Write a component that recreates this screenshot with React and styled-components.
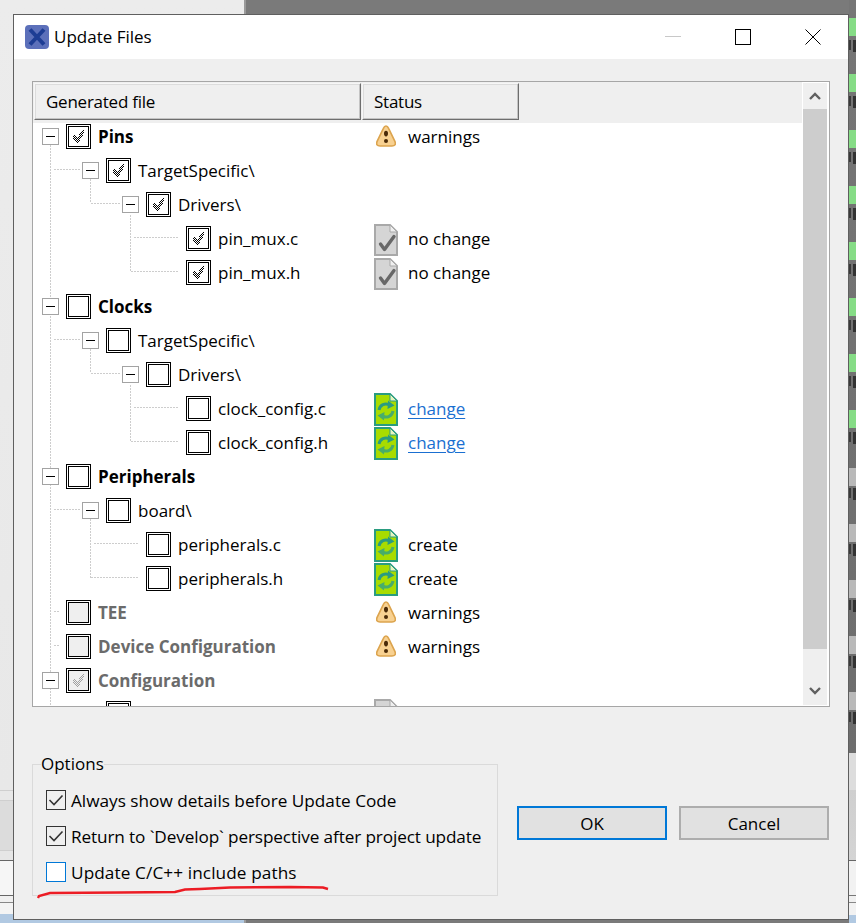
import React from 'react';
import styled, { createGlobalStyle } from 'styled-components';

const Global = createGlobalStyle`
  html, body { margin: 0; padding: 0; background: #e9e9e9; }
  body { font-family: "Open Sans", "Noto Sans", "Liberation Sans", sans-serif; }
`;

const Desktop = styled.div`
  position: relative;
  width: 856px;
  height: 923px;
  overflow: hidden;
  display: grid;
  grid-template-columns: 244px 605px 7px;
`;

const LeftPane = styled.div`
  background: linear-gradient(
    to bottom,
    #ececec 0, #e8e8e8 790px, #cfcfcf 790px, #cfcfcf 791px, #e8e8e8 791px, #e8e8e8 800px,
    #cfcfcf 800px, #cfcfcf 801px, #dcdcdc 801px, #dcdcdc 850px, #cfcfcf 850px, #cfcfcf 851px,
    #e6e6e6 851px, #e6e6e6 860px, #666 860px, #666 861px, #f6f6f6 861px, #f6f6f6 895px,
    #666 895px, #666 896px, #f0f0f0 896px, #f0f0f0 902px, #888 902px, #888 903px,
    #f4f4f4 903px, #f4f4f4 914px, #b1c9e2 914px
  );
`;

const MiddlePane = styled.div`
  background: #7a7a7a;
  border-left: 2px solid #9a9a9a;
`;

const RightStrip = styled.div`
  background:
    linear-gradient(to bottom,
      transparent 0, transparent 753px,
      #dddddd 753px, #dddddd 790px, #cfcfcf 790px, #d4d4d4 860px, #666 860px, #666 861px,
      #f2f2f2 861px, #f2f2f2 895px, #777 895px, #777 896px, #f0f0f0 896px, #f0f0f0 902px,
      #888 902px, #888 903px, #f2f2f2 903px, #f2f2f2 915px, #b1c9e2 915px),
    repeating-linear-gradient(to bottom,
      transparent 0, transparent 40px, #333 40px, #333 52px, transparent 52px, transparent 56px) 4px 0 / 3px 740px no-repeat,
    repeating-linear-gradient(to bottom,
      transparent 0, transparent 40px, #3a3a3a 40px, #3a3a3a 50px, transparent 50px, transparent 56px) 0 0 / 2px 740px no-repeat,
    linear-gradient(to bottom,
      transparent 0, transparent 468px, #b9b9b9 468px, #b9b9b9 486px, transparent 486px, transparent 524px,
      #b9b9b9 524px, #b9b9b9 542px, transparent 542px, transparent 580px,
      #b9b9b9 580px, #b9b9b9 598px, transparent 598px, transparent 636px,
      #b9b9b9 636px, #b9b9b9 654px, transparent 654px, transparent 692px,
      #b9b9b9 692px, #b9b9b9 710px, transparent 710px),
    repeating-linear-gradient(to bottom,
      transparent 0, transparent 18px, #86dc86 18px, #86dc86 36px, transparent 36px, transparent 56px) 0 0 / 100% 466px no-repeat,
    linear-gradient(to bottom, #767676, #6b6b6b);
`;

const Dialog = styled.div`
  position: absolute;
  left: 13px;
  top: 14px;
  width: 836px;
  height: 906px;
  box-sizing: border-box;
  border: 1px solid #5f5f5f;
  background: #efefef;
  display: flex;
  flex-direction: column;
  color: #000;
  font-size: 17px;
`;

const TitleBar = styled.div`
  height: 44px;
  flex: none;
  background: #fff;
  display: flex;
  align-items: center;
  padding-left: 11px;
  position: relative;
`;

const TitleText = styled.span`
  margin-left: 5px;
  line-height: 24px;
`;

const WindowControls = styled.div`
  margin-left: auto;
  display: flex;
  align-items: center;
  padding-right: 27px;
  gap: 54px;
`;

const ControlIcon = styled.svg`
  width: 16px;
  height: 16px;
  display: block;
`;

const TreeTable = styled.div`
  margin: 22px 18px 0;
  height: 626px;
  flex: none;
  box-sizing: border-box;
  border: 1px solid #a6a6a6;
  background: #fff;
  display: flex;
  overflow: hidden;
`;

const TreeMain = styled.div`
  width: 769px;
  flex: none;
  display: flex;
  flex-direction: column;
`;

const HeaderRow = styled.div`
  flex: none;
  height: 41px;
  box-sizing: border-box;
  background: #efefef;
  padding: 1px 0 0 1px;
  display: flex;
  align-items: flex-start;
  gap: 1px;
`;

const HeaderCell = styled.div`
  width: ${(p) => p.$w}px;
  height: 37px;
  box-sizing: border-box;
  padding: 0 0 0 11px;
  display: flex;
  align-items: center;
  background: #efefef;
  letter-spacing: -0.25px;
  border-right: 1px solid #6e6e6e;
  border-bottom: 1px solid #6e6e6e;
  box-shadow: inset -1px -1px 0 #c4c4c4, inset 1px 1px 0 #dcdcdc;
  border-left: 1px solid #f6f6f6;
  border-top: 1px solid #f6f6f6;
`;

const Tree = styled.div`
  position: relative;
  flex: 1;
  min-height: 0;
  overflow: hidden;
  display: flex;
  flex-direction: column;
  gap: 9px;
`;

const Guides = styled.svg`
  position: absolute;
  left: 0;
  top: 0;
  width: 769px;
  height: 583px;
`;

const Row = styled.div`
  position: relative;
  flex: none;
  height: 25px;
  display: grid;
  grid-template-columns: 341px 1fr;
  align-items: center;
`;

const NameCell = styled.div`
  display: flex;
  align-items: center;
  gap: 7px;
  padding-left: ${(p) => 9 + p.$level * 40}px;
`;

const Expander = styled.div`
  width: 17px;
  height: 17px;
  flex: none;
  box-sizing: border-box;
  border: 1px solid #a3a3a3;
  background: #fff;
  display: flex;
  align-items: center;
  justify-content: center;
  visibility: ${(p) => (p.$hidden ? 'hidden' : 'visible')};
  &::before {
    content: '';
    width: 9px;
    height: 1px;
    background: #000;
  }
`;

const TreeCheck = styled.div`
  width: 25px;
  height: 25px;
  flex: none;
  box-sizing: border-box;
  border: 1px solid #000;
  padding: 1px;
  background: #fff;
`;

const TreeCheckInner = styled.div`
  width: 100%;
  height: 100%;
  box-sizing: border-box;
  border: 1px solid #000;
  background: ${(p) => (p.$disabled ? '#efefef' : '#fff')};
  display: flex;
  align-items: center;
  justify-content: center;
`;

const NameText = styled.span`
  white-space: nowrap;
  line-height: 25px;
  padding-top: 1px;
  font-weight: ${(p) => (p.$bold ? 700 : 400)};
  color: ${(p) => (p.$disabled ? '#6b6b6b' : '#000')};
`;

const StatusCell = styled.div`
  display: flex;
  align-items: center;
  gap: 10px;
`;

const StatusSlot = styled.div`
  width: 24px;
  height: 25px;
  flex: none;
  display: flex;
  justify-content: center;
  align-items: center;
`;

const StatusIcon = styled.svg`
  flex: none;
  display: block;
  margin-top: ${(p) => p.$shift || 0}px;
`;

const StatusLink = styled.a`
  color: #1a6fd1;
  text-decoration: underline;
  text-underline-offset: 3px;
  line-height: 25px;
  padding-top: 1px;
`;

const StatusText = styled.span`
  line-height: 25px;
  padding-top: 1px;
`;

const Scrollbar = styled.div`
  margin-left: 1px;
  width: 24px;
  flex: none;
  background: #efefef;
  display: flex;
  flex-direction: column;
  margin-top: 1px;
  height: 622px;
`;

const ScrollButton = styled.div`
  height: ${(p) => p.$h}px;
  flex: none;
  display: flex;
  align-items: center;
  justify-content: center;
`;

const ScrollThumb = styled.div`
  height: 540px;
  flex: none;
  background: #cdcdcd;
`;

const ScrollGap = styled.div`
  flex: 1;
`;

const BottomRow = styled.div`
  margin-top: 45px;
  padding: 0 18px;
  display: flex;
  align-items: flex-start;
  gap: 19px;
`;

const OptionsGroup = styled.fieldset`
  width: 466px;
  height: 144px;
  box-sizing: border-box;
  margin: 0;
  padding: 14px 0 0 13px;
  border: 1px solid #dadada;
  display: flex;
  flex-direction: column;
  gap: 16px;
`;

const OptionsLegend = styled.legend`
  margin-left: -5px;
  padding: 0;
  line-height: 24px;
  font-size: 17px;
`;

const OptionRow = styled.label`
  display: flex;
  align-items: center;
  gap: 5px;
  height: 20px;
  white-space: nowrap;
  font-size: 17.2px;
  letter-spacing: ${(p) => p.$track || 0}px;
`;

const OptionBox = styled.span`
  width: 20px;
  height: 20px;
  flex: none;
  box-sizing: border-box;
  border: 1px solid ${(p) => (p.$focus ? '#0078d7' : '#333')};
  background: ${(p) => (p.$focus ? '#fff' : 'transparent')};
  display: flex;
`;

const Buttons = styled.div`
  margin-top: 54px;
  display: flex;
  gap: 12px;
`;

const DialogButton = styled.button`
  width: 150px;
  height: 34px;
  box-sizing: border-box;
  border: 2px solid ${(p) => (p.$primary ? '#0078d7' : '#adadad')};
  background: #e1e1e1;
  color: #000;
  font: inherit;
  padding: 0;
`;

const Scribble = styled.svg`
  position: absolute;
  left: 0;
  top: 0;
  width: 856px;
  height: 923px;
  pointer-events: none;
`;

const Logo = () => (
  <svg width="24" height="24" viewBox="0 0 24 24" style={{ display: 'block' }}>
    <rect x="0" y="0" width="24" height="24" rx="4" fill="#5c70ba" />
    <path d="M5 4.5 L19 19.5 M19 4.5 L5 19.5" stroke="#1d3d94" strokeWidth="4" fill="none" />
  </svg>
);

// Dithered double tick of the tree's check state: one [top, bottom] pixel span per column.
const tickSpans = [[5, 8], [5, 9], [6, 10], [7, 11], [7, 12], [6, 11], [4, 10], [3, 8], [2, 7], [0, 5], [0, 3]];
const DitherCheck = ({ disabled }) => (
  <svg width="11" height="13" viewBox="0 0 11 13" shapeRendering="crispEdges" style={{ display: 'block' }}>
    {tickSpans.flatMap(([top, bottom], x) => {
      const cells = [];
      for (let y = top; y <= bottom; y += 1) {
        if ((x + y) % 2 === 0) {
          cells.push(<rect key={`${x}-${y}`} x={x} y={y} width="1" height="1" fill={disabled ? '#a0a0a0' : '#000'} />);
        }
      }
      return cells;
    })}
  </svg>
);

const Warning = () => (
  <StatusIcon width="20" height="22" viewBox="0 0 20 22">
    <path
      d="M10 1 Q11.6 1 12.6 3.4 L19 16.6 Q20.4 21 16 21 H4 Q-.4 21 1 16.6 L7.4 3.4 Q8.4 1 10 1Z"
      fill="#f8d191"
      stroke="#dca44e"
      strokeWidth="1.6"
    />
    <ellipse cx="10" cy="8.6" rx="2" ry="2.8" fill="#4a2a08" />
    <circle cx="10" cy="16" r="2" fill="#4a2a08" />
  </StatusIcon>
);

const NoChange = () => (
  <StatusIcon $shift={3} width="24" height="32" viewBox="0 0 24 32">
    <path d="M1 1 H16 L23 8 V31 H1Z" fill="#d5d5d5" stroke="#a9a9a9" strokeWidth="2" />
    <path d="M16 1 V8 H23Z" fill="#efefef" stroke="#a9a9a9" strokeWidth="1" />
    <path d="M6.5 20 L10.5 25.5 L20 12.5" fill="none" stroke="#686868" strokeWidth="3.4" strokeLinecap="round" strokeLinejoin="round" />
  </StatusIcon>
);

const ChangeDoc = () => (
  <StatusIcon $shift={3} width="24" height="33" viewBox="0 0 24 33">
    <path d="M1 1 H16 L23 8 V32 H1Z" fill="#a8dc00" stroke="#2a9c80" strokeWidth="2" />
    <path d="M16 1 V8 H23Z" fill="#e6f4c0" stroke="#2a9c80" strokeWidth="1" />
    <path d="M5 17 C6 11.5 11 10 15 11.5" fill="none" stroke="#2a9c80" strokeWidth="3" />
    <path d="M14 7.5 L20.5 12.5 L13.5 16Z" fill="#2a9c80" />
    <path d="M19 18 C18 23.5 13 25 9 23.5" fill="none" stroke="#48ad6a" strokeWidth="3" />
    <path d="M10 27.5 L3.5 22.5 L10.5 19Z" fill="#48ad6a" />
  </StatusIcon>
);

const OptionTick = () => (
  <svg width="18" height="18" viewBox="0 0 18 18" style={{ display: 'block' }}>
    <path d="M2.5 9 L7 13.5 L15.5 4.5" fill="none" stroke="#333" strokeWidth="1.6" />
  </svg>
);

const rows = [
  { name: 'Pins', level: 0, bold: true, exp: true, check: true, status: 'warn', text: 'warnings' },
  { name: 'TargetSpecific\\', level: 1, exp: true, check: true },
  { name: 'Drivers\\', level: 2, exp: true, check: true },
  { name: 'pin_mux.c', level: 3, check: true, status: 'same', text: 'no change' },
  { name: 'pin_mux.h', level: 3, check: true, status: 'same', text: 'no change' },
  { name: 'Clocks', level: 0, bold: true, exp: true },
  { name: 'TargetSpecific\\', level: 1, exp: true },
  { name: 'Drivers\\', level: 2, exp: true },
  { name: 'clock_config.c', level: 3, status: 'new', text: 'change', link: true },
  { name: 'clock_config.h', level: 3, status: 'new', text: 'change', link: true },
  { name: 'Peripherals', level: 0, bold: true, exp: true },
  { name: 'board\\', level: 1, exp: true },
  { name: 'peripherals.c', level: 2, status: 'new', text: 'create' },
  { name: 'peripherals.h', level: 2, status: 'new', text: 'create' },
  { name: 'TEE', level: 0, bold: true, disabled: true, status: 'warn', text: 'warnings' },
  { name: 'Device Configuration', level: 0, bold: true, disabled: true, status: 'warn', text: 'warnings' },
  { name: 'Configuration', level: 0, bold: true, disabled: true, exp: true, check: true },
  { name: '', level: 1, check: true, status: 'same' },
];

// Connector segments in page coordinates: [x1, y1, x2, y2]
const toTree = ([a, b, c, d]) => [a - 33, b - 123, c - 33, d - 123];
const pinGroup = (dy) => [
  [54, 169 + dy, 80, 169 + dy],
  [90, 179 + dy, 90, 203 + dy],
  [91, 203 + dy, 120, 203 + dy],
  [130, 215 + dy, 130, 271 + dy],
  [134, 237 + dy, 179, 237 + dy],
  [131, 271 + dy, 179, 271 + dy],
];
const segments = [
  [50, 145, 50, 707],
  ...pinGroup(0),
  ...pinGroup(170),
  [54, 509, 80, 509],
  [90, 519, 90, 577],
  [94, 543, 139, 543],
  [91, 577, 139, 577],
  [54, 611, 60, 611],
  [54, 645, 60, 645],
].map(toTree);

const statusIcon = { warn: <Warning />, same: <NoChange />, new: <ChangeDoc /> };

export default function App() {
  return (
    <Desktop>
      <Global />
      <LeftPane />
      <MiddlePane />
      <RightStrip />
      <Dialog>
        <TitleBar>
          <Logo />
          <TitleText>Update Files</TitleText>
          <WindowControls>
            <ControlIcon viewBox="0 0 16 16">
              <path d="M0 7.5 H16" stroke="#c8c8c8" strokeWidth="1" />
            </ControlIcon>
            <ControlIcon viewBox="0 0 16 16">
              <rect x="0.5" y="0.5" width="15" height="15" fill="none" stroke="#000" strokeWidth="1" />
            </ControlIcon>
            <ControlIcon viewBox="0 0 16 16">
              <path d="M0.5 0.5 L15.5 15.5 M15.5 0.5 L0.5 15.5" stroke="#000" strokeWidth="1" />
            </ControlIcon>
          </WindowControls>
        </TitleBar>

        <TreeTable>
          <TreeMain>
            <HeaderRow>
              <HeaderCell $w={327}>Generated file</HeaderCell>
              <HeaderCell $w={157}>Status</HeaderCell>
            </HeaderRow>
            <Tree>
              <Guides viewBox="0 0 769 583">
                {segments.map(([x1, y1, x2, y2], i) => (
                  <line
                    key={i}
                    x1={x1 + 0.5}
                    y1={y1 + 0.5}
                    x2={x2 + 0.5}
                    y2={y2 + 0.5}
                    stroke="#9a9a9a"
                    strokeWidth="1"
                    strokeDasharray="1 2"
                  />
                ))}
              </Guides>
              {rows.map((r, i) => (
                <Row key={i}>
                  <NameCell $level={r.level}>
                    <Expander $hidden={!r.exp} />
                    <TreeCheck>
                      <TreeCheckInner $disabled={r.disabled}>
                        {r.check && <DitherCheck disabled={r.disabled} />}
                      </TreeCheckInner>
                    </TreeCheck>
                    {r.name && <NameText $bold={r.bold} $disabled={r.disabled}>{r.name}</NameText>}
                  </NameCell>
                  {r.status ? (
                    <StatusCell>
                      <StatusSlot>{statusIcon[r.status]}</StatusSlot>
                      {r.link ? <StatusLink>{r.text}</StatusLink> : r.text && <StatusText>{r.text}</StatusText>}
                    </StatusCell>
                  ) : (
                    <span />
                  )}
                </Row>
              ))}
            </Tree>
          </TreeMain>
          <Scrollbar>
            <ScrollButton $h={26}>
              <svg width="12" height="8" viewBox="0 0 12 8">
                <path d="M1 7 L6 2 L11 7" fill="none" stroke="#606060" strokeWidth="2.4" />
              </svg>
            </ScrollButton>
            <ScrollThumb />
            <ScrollGap />
            <ScrollButton $h={28}>
              <svg width="12" height="8" viewBox="0 0 12 8">
                <path d="M1 1 L6 6 L11 1" fill="none" stroke="#606060" strokeWidth="2.4" />
              </svg>
            </ScrollButton>
          </Scrollbar>
        </TreeTable>

        <BottomRow>
          <OptionsGroup>
            <OptionsLegend>Options</OptionsLegend>
            <OptionRow>
              <OptionBox><OptionTick /></OptionBox>
              Always show details before Update Code
            </OptionRow>
            <OptionRow $track={-0.12}>
              <OptionBox><OptionTick /></OptionBox>
              Return to `Develop` perspective after project update
            </OptionRow>
            <OptionRow $track={0.1}>
              <OptionBox $focus />
              Update C/C++ include paths
            </OptionRow>
          </OptionsGroup>
          <Buttons>
            <DialogButton $primary>OK</DialogButton>
            <DialogButton>Cancel</DialogButton>
          </Buttons>
        </BottomRow>
      </Dialog>
      <Scribble viewBox="0 0 856 923">
        <path
          d="M38 898 L39 896 L50 893 L120 892.5 L175 892 L185 889.5 L200 889 L230 887.5 L290 887 L323 887.5 L328 889"
          fill="none"
          stroke="#ec1c24"
          strokeWidth="2.4"
        />
      </Scribble>
    </Desktop>
  );
}
